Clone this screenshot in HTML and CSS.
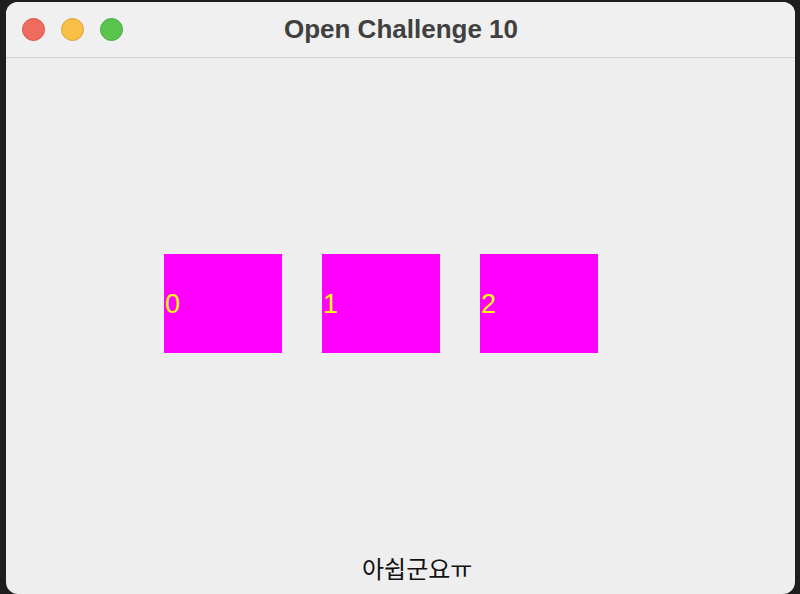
FILE: index.html
```html
<!DOCTYPE html>
<html>
<head>
<meta charset="utf-8">
<link rel="stylesheet" href="styles.css">
</head>
<body>
<div class="window">
  <div class="titlebar">
    <div class="lights">
      <span class="light red"></span>
      <span class="light yellow"></span>
      <span class="light green"></span>
    </div>
    <div class="title">Open Challenge 10</div>
  </div>
  <div class="content">
    <div class="boxes">
      <div class="box"><span>0</span></div>
      <div class="box"><span>1</span></div>
      <div class="box"><span>2</span></div>
    </div>
    <div class="status">아쉽군요ㅠ</div>
  </div>
</div>
</body>
</html>
```
FILE: styles.css
```css
html, body {
  margin: 0;
  padding: 0;
  background: #1e1e1e;
  width: 800px;
  height: 594px;
  overflow: hidden;
}
.window {
  margin: 2px 0 0 6px;
  width: 789px;
  height: 592px;
  background: #eeeeee;
  border-radius: 12px;
  overflow: hidden;
  display: flex;
  flex-direction: column;
}
.titlebar {
  height: 55px;
  background: #eff0ef;
  border-bottom: 1px solid #d2d2d2;
  display: flex;
  align-items: center;
  position: relative;
}
.lights {
  display: flex;
  gap: 16px;
  padding-left: 16px;
}
.light {
  width: 23px;
  height: 23px;
  border-radius: 50%;
  box-sizing: border-box;
}
.red { background: #ef6b5e; border: 1px solid #d9574b; }
.yellow { background: #f8be45; border: 1px solid #dea33a; }
.green { background: #5ac54e; border: 1px solid #4aa93f; }
.title {
  position: absolute;
  left: 0;
  right: 0;
  top: 0;
  bottom: 0;
  display: flex;
  align-items: center;
  justify-content: center;
  font-family: "Liberation Sans", Arial, sans-serif;
  font-weight: bold;
  font-size: 26px;
  color: #404040;
  padding-left: 1px;
}
.content {
  flex: 1;
  display: flex;
  flex-direction: column;
}
.boxes {
  display: flex;
  gap: 40px;
  padding-left: 158px;
  margin-top: 196px;
}
.box {
  width: 118px;
  height: 99px;
  background: #ff00ff;
  display: flex;
  align-items: center;
}
.box span {
  font-family: "Liberation Sans", Arial, sans-serif;
  font-size: 27px;
  color: #ffff00;
  padding-left: 1px;
  margin-top: 2px;
}
.status {
  margin-top: 199px;
  padding-left: 356px;
  font-family: "Noto Sans CJK KR", sans-serif;
  font-size: 24px;
  line-height: 32px;
  color: #111;
}
```
